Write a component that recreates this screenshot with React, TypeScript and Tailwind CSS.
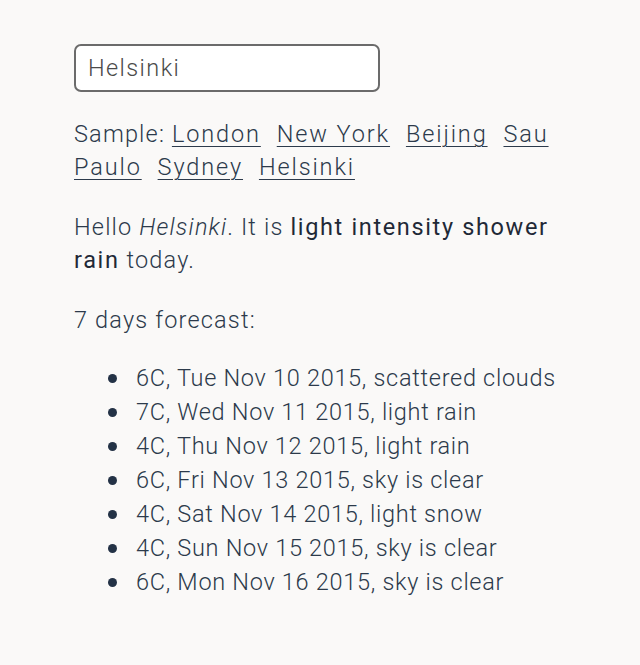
import { Fragment } from "react";

const cities = ["London", "New York", "Beijing", "Sau Paulo", "Sydney", "Helsinki"];

const forecast = [
  "6C, Tue Nov 10 2015, scattered clouds",
  "7C, Wed Nov 11 2015, light rain",
  "4C, Thu Nov 12 2015, light rain",
  "6C, Fri Nov 13 2015, sky is clear",
  "4C, Sat Nov 14 2015, light snow",
  "4C, Sun Nov 15 2015, sky is clear",
  "6C, Mon Nov 16 2015, sky is clear",
];

export default function App() {
  return (
    <div className="min-h-[665px] bg-[#faf9f8] px-[74px] pt-[44px] font-['Roboto',sans-serif] text-[23.5px] font-light leading-[33px] tracking-[0.05em] text-[#2c3a4b]">
      <input
        defaultValue="Helsinki"
        className="h-[48px] w-[306px] rounded-[7px] border-2 border-[#6b6b6b] bg-white px-[12px] text-[23.5px] font-light tracking-[0.06em] text-[#4a4a4a] outline-none"
      />
      <p className="mt-[26px]">
        Sample:{" "}
        {cities.map((c) => (
          <Fragment key={c}>
            <a href="#" className="mr-[9px] tracking-[0.08em] underline decoration-1 underline-offset-[4px]">
              {c}
            </a>{" "}
          </Fragment>
        ))}
      </p>
      <p className="mt-[27px]">
        Hello <em>Helsinki</em>. It is{" "}
        <strong className="font-normal tracking-[0.07em] text-[#1f2937]">light intensity shower rain</strong> today.
      </p>
      <p className="mt-[27px]">7 days forecast:</p>
      <ul className="mt-[24px] pl-[34px] leading-[34px] tracking-[0.03em]">
        {forecast.map((f) => (
          <li key={f} className="flex items-center">
            <span className="mr-[19px] h-[9px] w-[9px] shrink-0 rounded-full bg-[#233246]" />
            <span>{f}</span>
          </li>
        ))}
      </ul>
    </div>
  );
}
